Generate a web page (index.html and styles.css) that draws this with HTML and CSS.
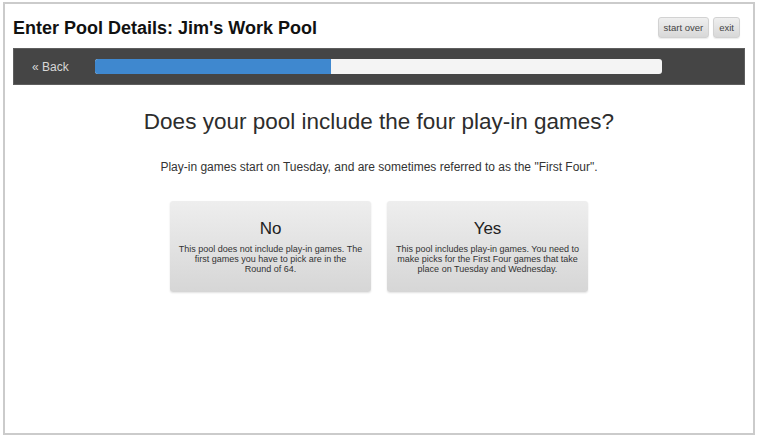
FILE: index.html
```html
<!DOCTYPE html>
<html>
<head>
<meta charset="utf-8">
<link rel="stylesheet" href="styles.css">
</head>
<body>
<div class="frame">
  <header class="top">
    <h1 class="title">Enter Pool Details: Jim's Work Pool</h1>
    <div class="actions">
      <button class="btn">start over</button>
      <button class="btn">exit</button>
    </div>
  </header>
  <nav class="bar">
    <a class="back">« Back</a>
    <div class="progress"><div class="fill" style="width:41.7%"></div></div>
  </nav>
  <main class="content">
    <h2 class="question">Does your pool include the four play-in games?</h2>
    <p class="hint">Play-in games start on Tuesday, and are sometimes referred to as the "First Four".</p>
    <div class="choices">
      <div class="card">
        <div class="card-title">No</div>
        <div class="card-text">This pool does not include play-in games. The first games you have to pick are in the<br>Round of 64.</div>
      </div>
      <div class="card">
        <div class="card-title">Yes</div>
        <div class="card-text">This pool includes play-in games. You need to make picks for the First Four games that take place on Tuesday and Wednesday.</div>
      </div>
    </div>
  </main>
</div>
</body>
</html>
```
FILE: styles.css
```css
html, body {
  margin: 0;
  padding: 0;
  background: #fff;
}
body {
  padding: 2px 0 0 3px;
  font-family: "Liberation Sans", Arial, sans-serif;
  color: #222;
}
.frame {
  box-sizing: border-box;
  width: 752px;
  height: 433px;
  border: 2px solid #cbcbcb;
  padding: 0 8px 0 8px;
}
.top {
  display: flex;
  align-items: flex-start;
  justify-content: space-between;
  height: 44px;
}
.title {
  margin: 0;
  padding-top: 13px;
  font-size: 18px;
  line-height: 22px;
  font-weight: bold;
  color: #111;
}
.actions {
  display: flex;
  gap: 4px;
  padding-top: 13px;
  margin-right: 5px;
}
.btn {
  font-family: "Liberation Sans", Arial, sans-serif;
  font-size: 9.5px;
  color: #444;
  height: 21px;
  padding: 0 5px;
  border: 1px solid #d2d2d2;
  border-radius: 3px;
  background: linear-gradient(#efefef, #d8d8d8);
  box-shadow: 0 1px 1px rgba(0,0,0,0.08);
}
.bar {
  display: flex;
  align-items: center;
  height: 37px;
  box-sizing: border-box;
  background: #454545;
  border: 1px solid #5e5e5e;
  padding: 0 82px 0 18px;
}
.back {
  font-size: 12px;
  color: #d8d8d8;
  width: 63px;
}
.progress {
  flex: 1;
  height: 15px;
  background: #f4f4f4;
  border-radius: 3px;
  overflow: hidden;
}
.fill {
  height: 100%;
  background: #3f88cf;
}
.content {
  display: flex;
  flex-direction: column;
  align-items: center;
}
.question {
  margin: 23px 0 0;
  font-size: 22.5px;
  line-height: 28px;
  font-weight: normal;
  color: #2d2d2d;
}
.hint {
  margin: 24px 0 0;
  font-size: 12px;
  line-height: 14px;
  color: #333;
}
.choices {
  display: flex;
  gap: 16px;
  margin-top: 27px;
}
.card {
  box-sizing: border-box;
  width: 201px;
  height: 91px;
  border-radius: 3px;
  background: linear-gradient(#eeeeee, #d6d6d6);
  box-shadow: 0 1px 2px rgba(0,0,0,0.12);
  text-align: center;
  padding: 18px 8px 0;
}
.card-title {
  font-size: 17px;
  line-height: 20px;
  color: #222;
}
.card-text {
  margin-top: 5px;
  font-size: 9px;
  line-height: 10px;
  color: #333;
}
```
